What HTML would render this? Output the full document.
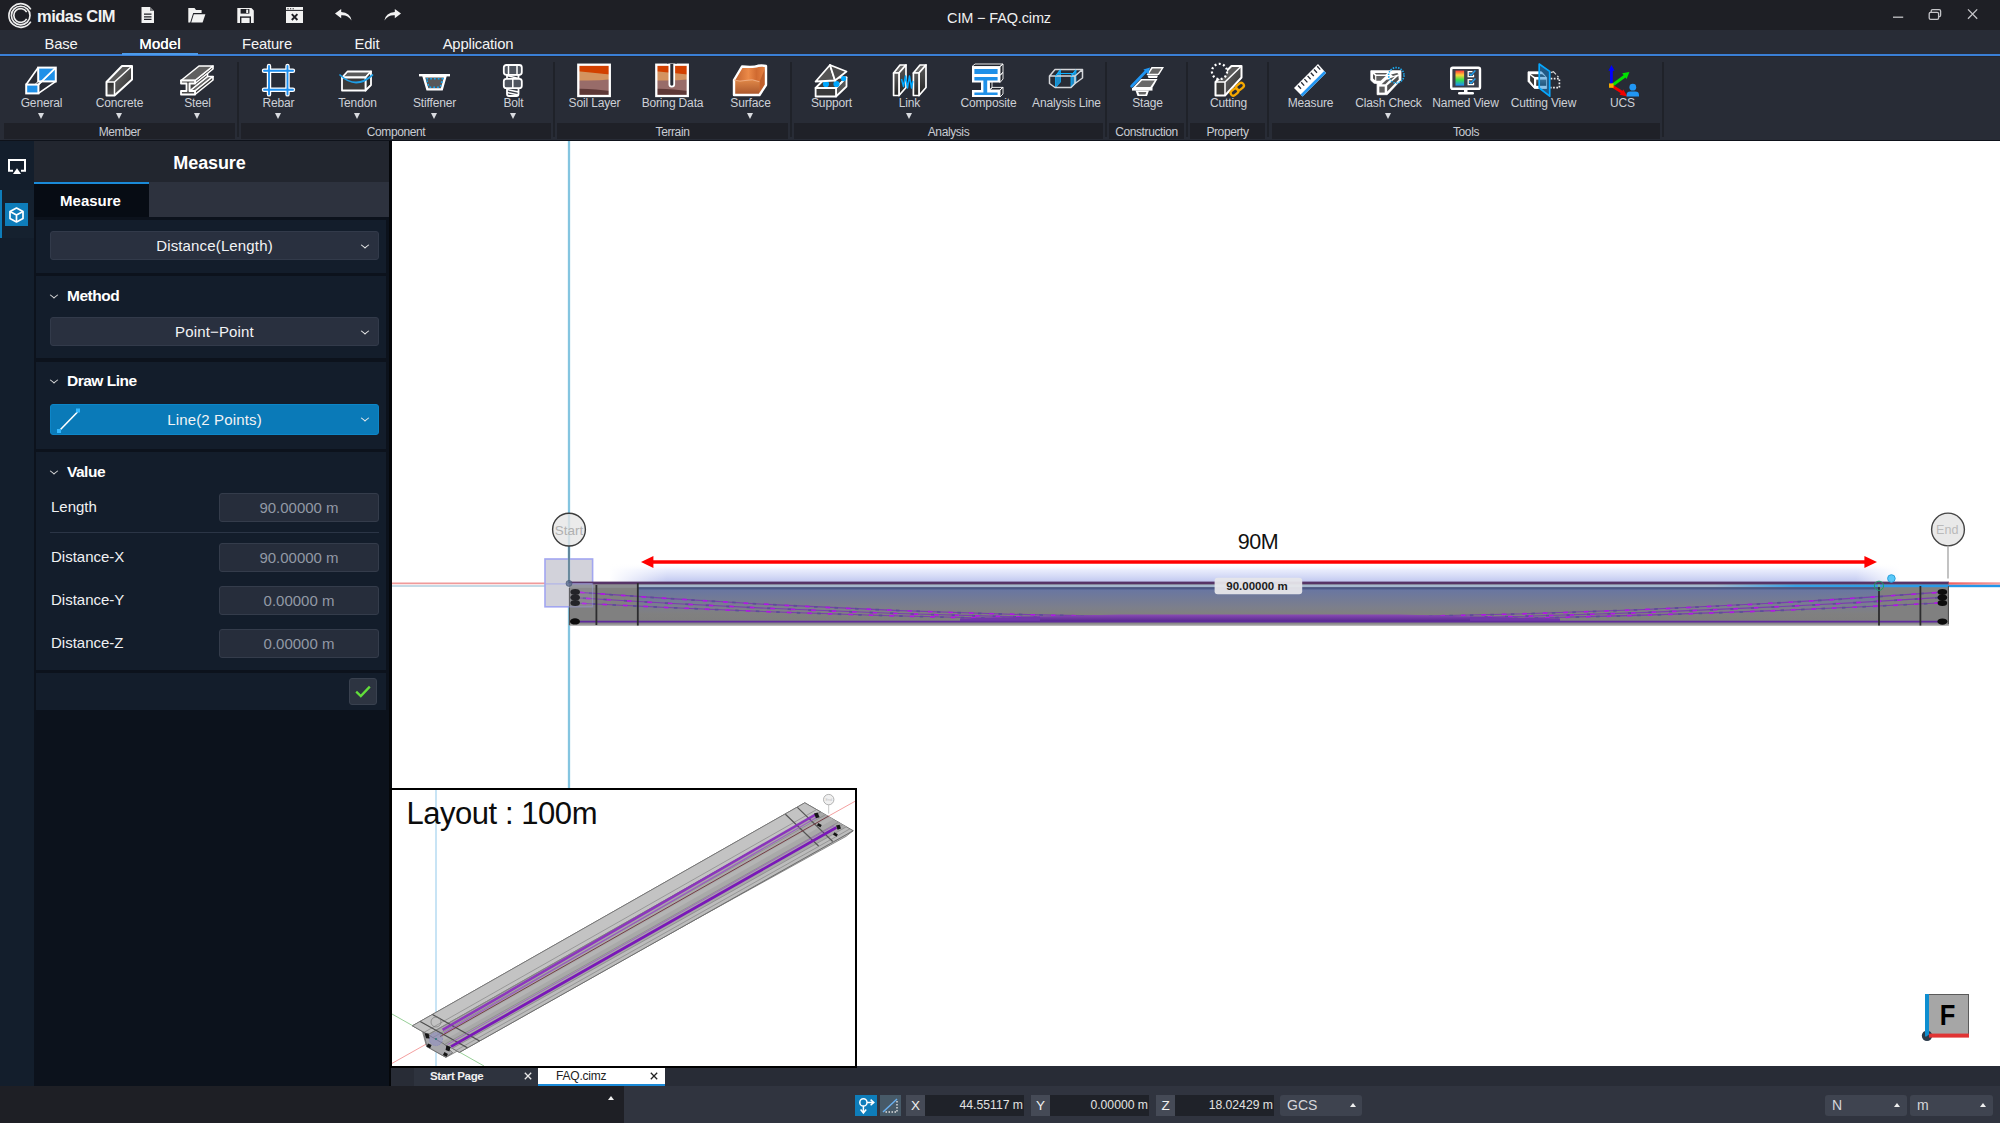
<!DOCTYPE html>
<html lang="en">
<head>
<meta charset="utf-8">
<title>CIM - FAQ.cimz</title>
<style>
*{box-sizing:border-box;margin:0;padding:0}
html,body{width:2000px;height:1123px;overflow:hidden;background:#fff}
body{position:relative;font-family:"Liberation Sans","DejaVu Sans",sans-serif;color:#fff}
.abs{position:absolute}
svg{display:block;overflow:visible}
#title{position:absolute;left:0;top:0;width:2000px;height:30px;background:#1e1f25}
#title .logo{position:absolute;left:37px;top:5.5px;font-size:16.5px;font-weight:700;letter-spacing:-.5px;color:#f2f2f2;line-height:20px;white-space:nowrap}
#title .ttl{position:absolute;left:899px;width:200px;top:8.8px;text-align:center;font-size:14.5px;color:#f0f0f0;line-height:18px;letter-spacing:-.15px;white-space:nowrap}
#menu{position:absolute;left:0;top:30px;width:2000px;height:26px;background:#282c36;border-bottom:2px solid #3a7fd6}
#menu span{position:absolute;top:5.4px;font-size:14.8px;line-height:18px;color:#f4f4f4;letter-spacing:-.15px;white-space:nowrap;transform:translateX(-50%)}
#menu .act{color:#fff;letter-spacing:.25px;text-shadow:.35px 0 0 #fff}
#menu .ul{position:absolute;left:122px;top:23px;width:76px;height:2px;background:#4c9bea}
#ribbon{position:absolute;left:0;top:56px;width:2000px;height:85px;background:#282c36;box-shadow:inset 0 1px 0 #23262e,inset 0 -1px 0 #0e121a}
.grp{position:absolute;top:67px;height:16px;background:#1f2128;font-size:12px;line-height:18px;color:#c9ccd3;text-align:center;letter-spacing:-.4px}
.sep{position:absolute;top:6px;width:2px;height:75px;background:#1f2229}
.it{position:absolute;top:0;width:0;height:66px}
.it svg{position:absolute;left:-16px;top:8px;width:32px;height:32px}
.it b{position:absolute;left:-49.5px;width:100px;text-align:center;top:40px;font-weight:400;font-size:12px;line-height:15px;color:#cdd0d7;letter-spacing:-.15px;white-space:nowrap}
.it i{position:absolute;left:-3px;top:57px;width:0;height:0;border-left:3px solid transparent;border-right:3px solid transparent;border-top:6px solid #d9dbe0}
#side{position:absolute;left:0;top:141px;width:34px;height:945px;background:#131e2c}
#panel{position:absolute;left:34px;top:141px;width:355px;height:945px;background:#0c121c}
#gap{position:absolute;left:389px;top:141px;width:3px;height:945px;background:#05070a}
.sec{position:absolute;left:2px;width:350px;background:#131d2b}
.dd{position:absolute;left:16px;width:329px;height:29px;background:#29303f;border:1px solid #323a4a;border-radius:3px;text-align:center;font-size:15px;line-height:27px;color:#f2f3f5;letter-spacing:.15px}
.dd::after{content:"";position:absolute;right:10px;top:9.5px;width:5px;height:5px;border-right:1.8px solid #ececec;border-bottom:1.8px solid #ececec;transform:scale(1,.8) rotate(45deg)}
.hd{position:absolute;left:33px;font-size:15.5px;font-weight:700;line-height:20px;color:#fff;letter-spacing:-.5px;white-space:nowrap}
.hd::before{content:"";position:absolute;left:-16px;top:5.5px;width:5px;height:5px;border-right:1.6px solid #d8d8d8;border-bottom:1.6px solid #d8d8d8;transform:scale(1,.8) rotate(45deg)}
.lb{position:absolute;left:17px;font-size:15px;line-height:20px;color:#f0f1f3;white-space:nowrap}
.vl{position:absolute;left:185px;width:160px;height:29px;background:#262d3b;border:1px solid #343c4b;border-radius:3px;text-align:center;font-size:15px;line-height:27px;color:#9299a5;}
#view{position:absolute;left:392px;top:141px;width:1608px;height:925px;background:#fff;overflow:hidden}
#tabs{position:absolute;left:391px;top:1066px;width:1609px;height:20px;background:#282c36}
#status{position:absolute;left:0;top:1086px;width:2000px;height:37px;background:#30343f}
#status .l{position:absolute;left:0;top:0;width:624px;height:37px;background:#1e1f25}
.sb{position:absolute;top:9px;height:21px;font-size:12.2px;line-height:21px;white-space:nowrap}

</style>
</head>
<body>

<div id="title">
<svg class="abs" style="left:0;top:0" width="40" height="30" viewBox="0 0 40 30" fill="none" stroke="#ededed" stroke-width="1.65">
<path d="M30.8 9.4A11.8 11.8 0 1 0 30.8 21.6"/>
<circle cx="20.7" cy="15.5" r="9.3"/>
<path d="M26.7 12.05A6.9 6.9 0 1 0 26.7 18.95"/>
</svg>
<div class="logo">midas CIM</div>
<svg class="abs" style="left:141px;top:7px" width="14" height="16" viewBox="0 0 14 16"><path d="M0.5 0H9L13 4V16H0.5Z" fill="#f2f2f2"/><path d="M9 0V4H13" fill="#1e1f25" opacity=".55"/><path d="M3 7.2H10.5M3 9.8H10.5M3 12.4H10.5" stroke="#1e1f25" stroke-width="1.2"/></svg>
<svg class="abs" style="left:188px;top:8px" width="18" height="15" viewBox="0 0 18 15"><path d="M0.3 0H6.5L8 2H13.6V5H5.2L2.2 14.5H0.3Z" fill="#f2f2f2"/><path d="M5.8 6.2H17.4L14.6 14.5H3.2Z" fill="#f2f2f2"/></svg>
<svg class="abs" style="left:237px;top:8px" width="17" height="15" viewBox="0 0 17 15"><path d="M0.3 0H14.4L16.8 2.4V15H0.3Z" fill="#f2f2f2"/><rect x="3.6" y="1" width="8.8" height="4.6" fill="#1e1f25"/><rect x="9.2" y="1.6" width="2" height="3.4" fill="#f2f2f2"/><rect x="3" y="8.4" width="11" height="6.6" fill="#1e1f25"/><rect x="4.4" y="9.8" width="8.2" height="5.2" fill="#f2f2f2"/></svg>
<svg class="abs" style="left:286px;top:7px" width="17" height="16" viewBox="0 0 17 16"><rect x="0" y="0" width="17" height="16" fill="#f2f2f2"/><rect x="1.2" y="3.6" width="14.6" height="0" fill="none"/><path d="M0 3.4H17" stroke="#1e1f25" stroke-width="1"/><path d="M1.4 1.7H2.6M4 1.7H5.2M6.6 1.7H7.8" stroke="#1e1f25" stroke-width="1.1"/><path d="M5.8 7.2L11.4 13M11.4 7.2L5.8 13" stroke="#1e1f25" stroke-width="1.9"/></svg>
<svg class="abs" style="left:335px;top:9px" width="18" height="12" viewBox="0 0 18 12"><path d="M6.2 0L0 4.6L6.2 9.2V6.2Q12.6 5.6 16.6 11.4Q15.2 3.4 6.2 2.9Z" fill="#f2f2f2"/></svg>
<svg class="abs" style="left:383px;top:9px" width="18" height="12" viewBox="0 0 18 12"><path d="M11.8 0L18 4.6L11.8 9.2V6.2Q5.4 5.6 1.4 11.4Q2.8 3.4 11.8 2.9Z" fill="#f2f2f2"/></svg>
<div class="ttl">CIM − FAQ.cimz</div>
<svg class="abs" style="left:1892px;top:8px" width="90" height="14" viewBox="0 0 90 14" fill="none" stroke="#c4c4c8" stroke-width="1.3"><path d="M1 9.2H11.2"/><rect x="39.2" y="1.6" width="9.4" height="7" rx="1.4"/><rect x="37.2" y="4.4" width="9.4" height="7" rx="1.4" fill="#1e1f25"/><path d="M76 1.4L85.2 10.8M85.2 1.4L76 10.8"/></svg>
</div>


<div id="menu">
<span style="left:61px">Base</span>
<span class="act" style="left:160px">Model</span>
<span style="left:267px">Feature</span>
<span style="left:367px">Edit</span>
<span style="left:478px">Application</span>
<div class="ul"></div>
</div>

<div id="ribbon">
<div class="it" style="left:41px"><svg viewBox="0 0 32 32"><path d="M13 17.5L1.5 29" stroke="#fff" stroke-width="1" fill="none"/>
<rect x="13.2" y="3.6" width="17.6" height="13.8" fill="#1e90e8" stroke="#fff" stroke-width="2"/>
<path d="M1.2 20.6L13.2 3.6M13.4 29.4L30.8 17.4M13.4 20.6L30.6 3.8" stroke="#fff" stroke-width="1.7" fill="none"/>
<path d="M13.4 20.6L30.6 3.8" stroke="#fff" stroke-width="1.2"/>
<rect x="1.2" y="20.6" width="12.2" height="8.8" fill="#1e90e8" stroke="#fff" stroke-width="2"/></svg><b>General</b><i></i></div>
<div class="it" style="left:119px"><svg viewBox="0 0 32 32"><defs><linearGradient id="gc1" x1="0" y1="0" x2="1" y2="1"><stop offset="0" stop-color="#6a6a6a"/><stop offset="1" stop-color="#2e2e2e"/></linearGradient>
<linearGradient id="gc2" x1="0" y1="0" x2="0" y2="1"><stop offset="0" stop-color="#2b2b2b"/><stop offset="1" stop-color="#555"/></linearGradient></defs>
<path d="M3.5 18L19 2H29L11.5 18Z" fill="#5a5a5a"/>
<path d="M11.5 18L29 2V15.5L11.5 31.5Z" fill="url(#gc1)"/>
<rect x="3.5" y="18" width="8" height="13.5" fill="url(#gc2)"/>
<path d="M3.5 18L19 2H29V15.5L11.5 31.5H3.5Z" fill="none" stroke="#fff" stroke-width="2" stroke-linejoin="round"/>
<path d="M3.5 18H11.5V31.5M11.5 18L29 2" fill="none" stroke="#fff" stroke-width="1.5"/></svg><b>Concrete</b><i></i></div>
<div class="it" style="left:197px"><svg viewBox="0 0 32 32"><g stroke="#fff" stroke-width="1.6" stroke-linejoin="round">
<path d="M8.5 27H14L32 12.5H26.5Z" fill="#666"/>
<path d="M14 27V30.5L32 16V12.5Z" fill="#3a3a3a"/>
<path d="M8.5 19.5V27L26.5 12.5V5Z" fill="#444"/>
<path d="M14 16.5V19.5L32 5V2Z" fill="#3a3a3a"/>
<path d="M0 16.5H14L32 2H18Z" fill="#606060"/>
<path d="M0 16.5H14V19.5H8.5V27H14V30.5H0V27H5.5V19.5H0Z" fill="#4a4a4a" stroke-width="1.8"/>
</g></svg><b>Steel</b><i></i></div>
<div class="it" style="left:278px"><svg viewBox="0 0 32 32"><g stroke-linecap="round">
<path d="M7 2V30.4M25.5 2V30.4M2 6.8H31M2 25.8H31" stroke="#fff" stroke-width="4.4"/>
<path d="M7 2V30.4M25.5 2V30.4M2 6.8H31M2 25.8H31" stroke="#1e90f0" stroke-width="1.9"/>
</g></svg><b>Rebar</b><i></i></div>
<div class="it" style="left:357px"><svg viewBox="0 0 32 32"><g stroke="#fff" stroke-width="1.8" stroke-linejoin="round">
<path d="M1 13.5L6.5 7.5H30L24.5 13.5Z" fill="#5a5a5a"/>
<path d="M24.5 13.5L30 7.5V21L24.5 26.5Z" fill="#2e2e2e"/>
<rect x="1" y="13.5" width="23.5" height="13" fill="#3a3a3a"/>
</g>
<path d="M-1 11Q15 26 31.5 11" fill="none" stroke="#1f9fe6" stroke-width="1.7" stroke-linecap="round"/></svg><b>Tendon</b><i></i></div>
<div class="it" style="left:434px"><svg viewBox="0 0 32 32"><path d="M5.6 12.4H27.4L23.8 25.4H9.4Z" fill="#585858" stroke="#fff" stroke-width="2.4" stroke-linejoin="miter"/>
<rect x="1" y="10" width="31" height="2.4" fill="#fff"/>
<path d="M8.4 14.8H24.8L22.2 23.2H11Z" fill="none" stroke="#12a8f6" stroke-width="1.6" stroke-dasharray="1.7 2.1"/></svg><b>Stiffener</b><i></i></div>
<div class="it" style="left:513px"><svg viewBox="0 0 32 32"><g stroke="#fff" stroke-width="1.8" fill="#4e545e" stroke-linejoin="round">
<path d="M10 10.5H21.5V15H10Z M10 24H21.5V30Q21.5 32 19.5 32H12Q10 32 10 30Z" fill="#3a3f48"/>
<path d="M10 11.5L21.5 14.5M10 25.5L21.5 28M10 28.5L21.5 31" stroke-width="1.3"/>
<rect x="6.8" y="1" width="18" height="9.8" rx="2.5"/>
<rect x="6.8" y="14.8" width="18" height="9.4" rx="2.5"/>
<path d="M11.5 1V10.8M20 1V10.8M15.8 14.8V24.2" stroke-width="1.5"/>
</g></svg><b>Bolt</b><i></i></div>
<div class="it" style="left:594px"><svg viewBox="0 0 32 32"><rect x="0" y="0" width="32" height="33" fill="#5e3836"/>
<path d="M0 16L10 16Q22 16 32 15V27L18 25.6Q8 24.6 0 24.8Z" fill="#986c69"/>
<path d="M0 6L32 10V15.4Q22 16.4 10 16.4L0 16.6Z" fill="#d4935f"/>
<path d="M0 0H32V10.4L0 7.2Z" fill="#d24000"/>
<rect x="0.3" y="0.7" width="31.5" height="31.3" fill="none" stroke="#fff" stroke-width="2.3"/></svg><b>Soil Layer</b></div>
<div class="it" style="left:672px"><svg viewBox="0 0 32 32"><rect x="0" y="0" width="32" height="33" fill="#5e3836"/>
<path d="M0 16L10 16Q22 16 32 15V27L18 25.6Q8 24.6 0 24.8Z" fill="#986c69"/>
<path d="M0 6L32 10V15.4Q22 16.4 10 16.4L0 16.6Z" fill="#d4935f"/>
<path d="M0 0H32V10.4L0 7.2Z" fill="#d24000"/>
<rect x="0.3" y="0.7" width="31.5" height="31.3" fill="none" stroke="#fff" stroke-width="2.3"/><path d="M13.4 -1V20.6Q13.4 22.6 15.8 22.6Q18.2 22.6 18.2 20.6V-1Z" fill="#282c36" stroke="#fff" stroke-width="1.8"/><rect x="11" y="-2.4" width="10" height="1.9" fill="#282c36"/></svg><b>Boring Data</b></div>
<div class="it" style="left:750px"><svg viewBox="0 0 32 32"><defs><linearGradient id="gs1" x1="0" y1="0" x2="0" y2="1"><stop offset="0" stop-color="#e08848"/><stop offset="1" stop-color="#a8542a"/></linearGradient>
<linearGradient id="gs2" x1="0" y1="0" x2="1" y2="0"><stop offset="0" stop-color="#c0602c"/><stop offset=".45" stop-color="#ec8a48"/><stop offset=".7" stop-color="#d06a30"/><stop offset="1" stop-color="#e88444"/></linearGradient></defs>
<path d="M0 16L8 2.5Q20 3.5 24 1.8Q28 1 32 2V21L25.5 31H0Z" fill="url(#gs2)"/>
<path d="M25.5 17.7L32 2V21L25.5 31Z" fill="#bf5f2b"/>
<path d="M0 16Q6 18 12 16.4Q18 14.6 25.5 17.7V31H0Z" fill="url(#gs1)"/>
<path d="M0 16L8 2.5Q20 3.5 24 1.8Q28 1 32 2V21L25.5 31H0Z" fill="none" stroke="#fff" stroke-width="2.4" stroke-linejoin="round"/>
<path d="M0 16Q6 18 12 16.4Q18 14.6 25.5 17.7" fill="none" stroke="#f2b890" stroke-width=".8"/></svg><b>Surface</b><i></i></div>
<div class="it" style="left:831px"><svg viewBox="0 0 32 32"><g stroke="#fff" stroke-width="1.8" stroke-linejoin="round">
<path d="M0.6 24L11 13.5H31.5L21 24Z" fill="#3d3d3d"/>
<path d="M21 24L31.5 13.5V22.5L21 32.5Z" fill="#555"/>
<rect x="0.6" y="24" width="20.4" height="8.5" fill="#3a3a3a"/>
</g>
<circle cx="11" cy="20" r="3.1" fill="#00a8ff"/><circle cx="21.5" cy="20" r="3.1" fill="#00a8ff"/><circle cx="28.6" cy="14.6" r="2.6" fill="#00a8ff"/>
<g stroke="#fff" stroke-width="1.8" stroke-linejoin="round">
<path d="M15 1L0.6 17.5L20 16.5Z" fill="#555"/>
<path d="M15 1L20 16.5L31.5 7.5Z" fill="#4a4a4a"/>
</g></svg><b>Support</b></div>
<div class="it" style="left:909px"><svg viewBox="0 0 32 32"><defs><linearGradient id="gl1" x1="0" y1="0" x2="0" y2="1"><stop offset="0" stop-color="#5a5a5a"/><stop offset="1" stop-color="#222"/></linearGradient></defs>
<g stroke="#fff" stroke-width="1.7" stroke-linejoin="round">
<path d="M0.6 9L7 1H13L6 9Z" fill="#666"/><path d="M6 9L13 1V23.5L6 31.5Z" fill="url(#gl1)"/><rect x="0.6" y="9" width="5.4" height="22.5" fill="url(#gl1)"/>
<path d="M20.4 9L27 1H33L26 9Z" fill="#666"/><path d="M26 9L33 1V23.5L26 31.5Z" fill="url(#gl1)"/><rect x="20.4" y="9" width="5.6" height="22.5" fill="url(#gl1)"/>
</g>
<path d="M8.5 15L10.5 22.5L12.5 12L14.5 24L16.5 12L18.5 24L19.8 17" fill="none" stroke="#00a8ff" stroke-width="1.5" stroke-linejoin="round"/></svg><b>Link</b><i></i></div>
<div class="it" style="left:988px"><svg viewBox="0 0 32 32"><path d="M28 2.5L31 0H3L0 2.5ZM28 2.5L31 0V8L28 11.5ZM28 11.5L31 8.5V15L28 18.5ZM17.5 18.5L20 16.5V24L17.5 26ZM28 26L31 23V30L28 33ZM17.5 26L20 23.4H31L28 26Z" fill="#22252c" stroke="#fff" stroke-width=".9" stroke-linejoin="round"/>
<path d="M0 2.5H28V18.5H17.5V26H28V33H0V26H9V18.5H0Z" fill="#fff"/>
<path d="M2.4 5H25.6V10H2.4ZM2.4 13H25.6V16.5H15.2V28.5H25.6V31H2.4V28.5H11.4V16.5H2.4Z" fill="#1e90e8"/></svg><b>Composite</b></div>
<div class="it" style="left:1066px"><svg viewBox="0 0 32 32"><path d="M5.5 12L10.5 5.8V18L5.5 23.5ZM21 12L26 5.8V19L21 23.5Z" fill="#1a9de4" fill-opacity=".85" stroke="#10b0ff" stroke-width=".8"/>
<g fill="none" stroke="#d4d6da" stroke-width="1.5" stroke-linejoin="round">
<path d="M-0.5 12L5 5.5H32.5L25 12ZM-0.5 12V19.5L5 23.5H21L25 19.5V12M32.5 5.5V14L25 19.5"/>
</g>
<path d="M5.5 12L10.5 5.8M21 12L26 5.8M7 9.5H23.5" fill="none" stroke="#10b0ff" stroke-width="1.1"/></svg><b>Analysis Line</b></div>
<div class="it" style="left:1147px"><svg viewBox="0 0 32 32"><path d="M16.5 11.5H27L26 14H17.5Z" fill="#fff"/>
<path d="M15.5 11L20.5 3H33L28 11Z" fill="#fff"/>
<path d="M18 9.7L21.5 4.4H30.5L27 9.7Z" fill="#666"/>
<path d="M4.5 26.5H18L16 32H6.5Z" fill="#fff"/>
<path d="M7.2 28H15.4L14.4 30.5H8.2Z" fill="#666"/>
<path d="M1 24H21.5V26.6H1Z" fill="#fff"/>
<path d="M1 24.5L10 15H26.5L21 24.5Z" fill="#fff"/>
<path d="M4.6 23L11 16.4H23.8L19.4 23Z" fill="#6a6a6a"/>
<path d="M0.6 22.2L15 7.2" stroke="#2196f3" stroke-width="2.7" stroke-linecap="round"/>
<path d="M19 3.5L12.4 5.6L17.4 10.2Z" fill="#2196f3"/></svg><b>Stage</b></div>
<div class="it" style="left:1228px"><svg viewBox="0 0 32 32"><defs><linearGradient id="gk1" x1="0" y1="0" x2="1" y2="1"><stop offset="0" stop-color="#6a6a6a"/><stop offset="1" stop-color="#2e2e2e"/></linearGradient></defs>
<path d="M3.5 18L19.5 2H29.5L13 18Z" fill="#5a5a5a"/>
<path d="M13 18L29.5 2V13.5L13 31.5Z" fill="url(#gk1)"/>
<rect x="3.5" y="18" width="9.5" height="13.5" fill="#3a3a3a"/>
<path d="M3.5 18L19.5 2H29.5V13.5L13 31.5H3.5Z" fill="none" stroke="#fff" stroke-width="2" stroke-linejoin="round"/>
<path d="M3.5 18H13V31.5M13 18L29.5 2" fill="none" stroke="#fff" stroke-width="1.5"/>
<circle cx="7.5" cy="7.5" r="7.6" fill="#282c36" stroke="#fff" stroke-width="2.2" stroke-dasharray="2 2.35" />
<g fill="none" stroke="#f5a800" stroke-width="2.3">
<rect x="-4.2" y="-2.6" width="8.4" height="5.2" rx="2.6" transform="translate(22.5 28) rotate(-38)"/>
<rect x="-4.2" y="-2.6" width="8.4" height="5.2" rx="2.6" transform="translate(28 22.5) rotate(-38)"/>
</g></svg><b>Cutting</b></div>
<div class="it" style="left:1310px"><svg viewBox="0 0 32 32"><path d="M0 24L24 0L32 9L8.5 32.5Z" fill="#fff"/>
<path d="M6.6 30.4L30.2 7L32 9L8.5 32.5Z" fill="#2196f3"/>
<path d="M4 21.5L7 24.8M7.2 18.3L10.2 21.6M10.4 15.1L13.4 18.4M13.6 11.9L16.6 15.2M16.8 8.7L19.8 12M20 5.5L23 8.8M23.2 2.3L26.2 5.6" stroke="#282c36" stroke-width="1.3"/></svg><b>Measure</b></div>
<div class="it" style="left:1388px"><svg viewBox="0 0 32 32"><path d="M-1.2 6.7H29V16L15.2 30.7H5.1V19.6L2 19.2L-1.2 16.3Z" fill="#fff" stroke="#fff" stroke-width=".8" stroke-linejoin="round"/>
<path d="M1 9.9L3.1 11.7V16.3L1 14.5Z" fill="#555"/>
<path d="M2.6 8.9H15.2L13.6 10.4H4.2Z" fill="#585858"/>
<path d="M4.3 12H13.8L8.6 16.8H4.3Z" fill="#606060"/>
<rect x="7.3" y="22.6" width="5.4" height="6" fill="#5c5c5c"/>
<path d="M15.2 21.4L26.4 11.8L26.8 15.6L15.2 27.4Z" fill="#4c4c4c"/>
<path d="M9.6 20.2L14.4 15.8L18.6 15L13.4 20.2Z" fill="#5a5a5a"/>
<path d="M19 10.4L25.2 9L26.6 10.2L21 11.9Z" fill="#555"/>
<path d="M17.6 14.6L23 12.6L19 16.2Z" fill="#5a5a5a"/>
<circle cx="24.3" cy="11.3" r="7.7" fill="none" stroke="#1eaaf0" stroke-width="1.6" stroke-dasharray="1.5 1.2"/></svg><b>Clash Check</b><i></i></div>
<div class="it" style="left:1465px"><svg viewBox="0 0 32 32"><defs><linearGradient id="gn1" x1="0" y1="0" x2="0" y2="1"><stop offset="0" stop-color="#ff3a3a"/><stop offset=".3" stop-color="#ffd23a"/><stop offset=".62" stop-color="#35e04a"/><stop offset="1" stop-color="#1e8cff"/></linearGradient></defs>
<rect x="2.2" y="3.8" width="28.8" height="21" rx="1.6" fill="#3b3f4a" stroke="#fff" stroke-width="2.4"/>
<rect x="15" y="25" width="3.5" height="4" fill="#fff"/><rect x="9" y="28" width="16" height="2.6" rx="1.3" fill="#fff"/>
<rect x="6.5" y="6.6" width="8.6" height="15" fill="url(#gn1)"/>
<path d="M23.5 7.6H19.2V12.6H24.5V10.8M23.5 15.6H19.2V20.6H24.5V18.8" fill="none" stroke="#fff" stroke-width="1.3"/>
<path d="M20.3 9.4L22 11.2L26.4 6.6M20.3 17.4L22 19.2L26.4 14.6" fill="none" stroke="#1ea0f0" stroke-width="1.4"/></svg><b>Named View</b></div>
<div class="it" style="left:1543px"><svg viewBox="0 0 32 32"><defs><linearGradient id="gv1" x1="0" y1="0" x2="0" y2="1"><stop offset="0" stop-color="#5c5c5c"/><stop offset="1" stop-color="#262626"/></linearGradient>
<linearGradient id="gv2" x1="0" y1="0" x2="0" y2="1"><stop offset="0" stop-color="#262626"/><stop offset="1" stop-color="#4a4a4a"/></linearGradient></defs>
<g fill="none" stroke="#ececec" stroke-width="1.7" stroke-dasharray="1.7 1.5"><path d="M23.6 14.6H32.4V23.6H23.4"/></g>
<path d="M23.8 8.6L26.4 7.6L29 10.4M30.2 12L31.6 13" fill="none" stroke="#d8d8d8" stroke-width="1.2"/>
<path d="M1 7.8H14.5L19.6 13.6V24.5H7.4L1 17.4Z" fill="#fff" stroke="#fff" stroke-width=".8" stroke-linejoin="round"/>
<path d="M3.8 10.3H15.2L18.8 13.1H7.8Z" fill="url(#gv2)"/>
<path d="M3.1 11.3L7 14.5V21.7L3.1 17Z" fill="#363636"/>
<rect x="9.2" y="15.6" width="10" height="6.2" fill="url(#gv1)"/>
<path d="M12.2 0L22.7 7.4V32.2L12.2 24Z" fill="#1a86d4" fill-opacity=".5" stroke="#06a8ff" stroke-width="1.7" stroke-linejoin="round"/></svg><b>Cutting View</b></div>
<div class="it" style="left:1622px"><svg viewBox="0 0 32 32"><path d="M5.4 21V6" stroke="#0000ff" stroke-width="2.8"/><path d="M2.4 6.8H8.6L5.5 1Z" fill="#0000ff"/>
<path d="M6 21.5L19 12" stroke="#00e400" stroke-width="2.8"/><path d="M16.2 9.2L23.4 8L20.6 15Z" fill="#00e400"/>
<path d="M6 22L16.5 28.5" stroke="#f00000" stroke-width="2.8"/><path d="M13.5 30.8L21.4 32.4L17.4 25.4Z" fill="#f00000"/>
<rect x="3" y="19.4" width="4.6" height="4.4" fill="#f5a800"/>
<circle cx="26.8" cy="23.2" r="3.4" fill="#2196f3"/>
<path d="M20.6 32.6V31Q20.6 27.6 24.4 27.6H29.2Q33 27.6 33 31V32.6Z" fill="#2196f3"/></svg><b>UCS</b></div>
<div class="grp" style="left:4px;width:231px">Member</div>
<div class="grp" style="left:241px;width:310px">Component</div>
<div class="grp" style="left:557px;width:231px">Terrain</div>
<div class="grp" style="left:794px;width:309px">Analysis</div>
<div class="grp" style="left:1109px;width:75px">Construction</div>
<div class="grp" style="left:1190px;width:75px">Property</div>
<div class="grp" style="left:1272px;width:388px">Tools</div>
<div class="sep" style="left:237px"></div>
<div class="sep" style="left:553px"></div>
<div class="sep" style="left:790px"></div>
<div class="sep" style="left:1105px"></div>
<div class="sep" style="left:1186px"></div>
<div class="sep" style="left:1267px"></div>
<div class="sep" style="left:1662px"></div>
</div>
<div id="side">
<div class="abs" style="left:0;top:49px;width:34px;height:48px;background:#15212f"></div>
<div class="abs" style="left:0;top:49px;width:2px;height:48px;background:#0e7dba"></div>
<svg class="abs" style="left:8px;top:18px" width="18" height="16" viewBox="0 0 18 16"><path d="M5 11.8H1V1H17V11.8H13" fill="none" stroke="#fff" stroke-width="2"/><path d="M9 9.2L13 15H5Z" fill="#fff"/></svg>
<div class="abs" style="left:5px;top:62px;width:23px;height:23px;background:#0e7dba"></div>
<svg class="abs" style="left:9px;top:66px" width="15" height="16" viewBox="0 0 15 16" fill="none" stroke="#fff" stroke-width="1.7" stroke-linejoin="round"><path d="M7.5 1L14 4.5V11.5L7.5 15L1 11.5V4.5Z"/><path d="M1 4.5L7.5 8L14 4.5M7.5 8V15"/></svg>
</div>
<div id="panel">
<div class="abs" style="left:0;top:0;width:355px;height:41px;background:#22262f"></div>
<div class="abs" style="left:0;top:11px;width:351px;text-align:center;font-size:18px;font-weight:700;line-height:22px;letter-spacing:-.1px">Measure</div>
<div class="abs" style="left:0;top:41px;width:355px;height:35px;background:#2d323e"></div>
<div class="abs" style="left:0;top:43px;width:115px;height:33px;background:#070c14"></div>
<div class="abs" style="left:0;top:41px;width:115px;height:2px;background:#1a8ad8"></div>
<div class="abs" style="left:0;top:50px;width:113px;text-align:center;font-size:15px;font-weight:700;line-height:20px">Measure</div>

<div class="sec" style="top:79px;height:53px"><div class="dd" style="left:14px;top:11px">Distance(Length)</div></div>
<div class="sec" style="top:135px;height:82px"><div class="hd" style="left:31px;top:10px">Method</div><div class="dd" style="left:14px;top:41px">Point−Point</div></div>
<div class="sec" style="top:221px;height:87px"><div class="hd" style="left:31px;top:9px">Draw Line</div>
 <div class="dd" style="left:14px;top:42px;height:31px;line-height:29px;background:#0a7ab8;border-color:#0d86c8">Line(2 Points)
 <svg class="abs" style="left:5px;top:2px" width="26" height="26" viewBox="0 0 26 26"><path d="M3.5 23.5L21.5 5" stroke="#fff" stroke-width="1.6"/><rect x="1" y="22" width="4" height="4" fill="#35b8ff"/><rect x="20" y="1.5" width="4" height="4" fill="#35b8ff"/></svg></div></div>
<div class="sec" style="top:311px;height:218px"><div class="hd" style="left:31px;top:10px">Value</div>
 <div class="lb" style="left:15px;top:45px">Length</div><div class="vl" style="left:183px;top:41px">90.00000 m</div>
 <div class="abs" style="left:14px;top:80px;width:329px;height:1px;background:#2b3546"></div>
 <div class="lb" style="left:15px;top:95px">Distance-X</div><div class="vl" style="left:183px;top:91px">90.00000 m</div>
 <div class="lb" style="left:15px;top:138px">Distance-Y</div><div class="vl" style="left:183px;top:134px">0.00000 m</div>
 <div class="lb" style="left:15px;top:181px">Distance-Z</div><div class="vl" style="left:183px;top:177px">0.00000 m</div>
</div>
<div class="sec" style="top:532px;height:37px"><div class="abs" style="left:313px;top:5px;width:28px;height:27px;background:#2d3441;border:1px solid #39414f;border-radius:3px"></div>
<svg class="abs" style="left:319px;top:12px" width="16" height="13" viewBox="0 0 16 13"><path d="M1.2 6.6L5.8 11L14.8 1.6" fill="none" stroke="#62de3a" stroke-width="2.3"/></svg></div>
</div>
<div id="gap"></div>

<div id="view">
<svg class="abs" style="left:-1px;top:0" width="1609" height="925" viewBox="391 141 1609 925" font-family="Liberation Sans, sans-serif">
<defs>
<linearGradient id="glowv" x1="0" y1="0" x2="0" y2="1"><stop offset="0" stop-color="#ffffff" stop-opacity="0"/><stop offset=".35" stop-color="#e6eafc" stop-opacity=".9"/><stop offset="1" stop-color="#bcc4ee"/></linearGradient>
<linearGradient id="glowh" x1="0" y1="0" x2="1" y2="0"><stop offset="0" stop-color="#fff" stop-opacity="1"/><stop offset=".045" stop-color="#fff" stop-opacity="0"/><stop offset=".965" stop-color="#fff" stop-opacity="0"/><stop offset="1" stop-color="#fff" stop-opacity="1"/></linearGradient>
<linearGradient id="body" x1="0" y1="0" x2="0" y2="1"><stop offset="0" stop-color="#6876a2"/><stop offset=".55" stop-color="#7c7f8c"/><stop offset=".75" stop-color="#808080"/><stop offset="1" stop-color="#7e7e7e"/></linearGradient>
<linearGradient id="band" x1="0" y1="0" x2="1" y2="0"><stop offset="0" stop-color="#a4b6cc"/><stop offset=".79" stop-color="#a4b8d0"/><stop offset=".85" stop-color="#38a0e6"/><stop offset="1" stop-color="#2196e8"/></linearGradient>
<linearGradient id="purp" x1="0" y1="0" x2="0" y2="1"><stop offset="0" stop-color="#8a4cb4"/><stop offset="1" stop-color="#55268e"/></linearGradient>
<linearGradient id="redf" x1="0" y1="0" x2="1" y2="0"><stop offset="0" stop-color="#f06060"/><stop offset="1" stop-color="#f4a0a0"/></linearGradient>
</defs>
<!-- axis lines -->
<path d="M391 583.4H545" stroke="#f09a9a" stroke-width="1.7"/>
<path d="M391 586H545" stroke="#c4dae6" stroke-width="2"/>
<path d="M569 141V788" stroke="#84c5e0" stroke-width="2.3"/>
<!-- glow -->
<rect x="610" y="563" width="1290" height="20" fill="url(#glowv)"/>
<rect x="609" y="562" width="1292" height="22" fill="url(#glowh)"/>
<!-- selection square -->
<rect x="545" y="559" width="47.6" height="47.8" fill="#d2d2da" stroke="#a2a6f0" stroke-width="1.6"/>
<path d="M569 546V584" stroke="#86c4de" stroke-width="2.3" opacity=".7"/><path d="M569 546V584" stroke="#4a6274" stroke-width="1.2"/>
<!-- beam -->
<rect x="569" y="582" width="1380" height="43.4" fill="#808080"/>
<rect x="638" y="589" width="1241" height="33" fill="url(#body)"/>
<rect x="569" y="584.4" width="69" height="3.4" fill="#8c8e92"/>
<rect x="638" y="584.5" width="1362" height="2.7" fill="url(#band)"/>
<rect x="638" y="587.2" width="1241" height="2.2" fill="#4a5886"/>
<rect x="569" y="581.6" width="1380" height="2.6" fill="#563466"/>
<rect x="1948.5" y="582.3" width="52" height="2.3" fill="url(#redf)"/>
<rect x="569" y="623.6" width="1380" height="1.8" fill="#9a9a9a"/>
<!-- tendons -->
<g fill="none" stroke="#7a3eae" stroke-width="1.1">
<path id="t1" d="M580 592.4Q919.5 617.6 1259 617.6Q1598.5 617.6 1938 592.4"/>
<path id="t2" d="M580 598Q919.5 619.6 1259 619.6Q1598.5 619.6 1938 597.6"/>
<path id="t3" d="M580 603.2Q919.5 621 1259 621Q1598.5 621 1938 603"/>
</g>
<g fill="none" stroke="#5e4c98" stroke-width="1.8" stroke-dasharray="3.5 17">
<use href="#t1" stroke-dashoffset="-9"/><use href="#t2" stroke-dashoffset="-3"/><use href="#t3" stroke-dashoffset="-12"/>
</g>
<g fill="none" stroke="#b216e6" stroke-width="1.7" stroke-dasharray="4.5 16">
<use href="#t1"/><use href="#t2" stroke-dashoffset="-6"/><use href="#t3" stroke-dashoffset="-2"/>
</g>
<path d="M1040 616.4L1120 614.6H1400L1470 616.4V621.6H1040Z" fill="url(#purp)"/>
<path d="M960 618.6L1040 616.4V621.6H960Z M1470 616.4L1560 618.6V621.6H1470Z" fill="#7038a8"/>
<path d="M580 621.6H1938" stroke="#5e2a9c" stroke-width="1.8"/>
<!-- diaphragm lines -->
<path d="M596.4 585V625M637.8 583V625.6M1879 586V625.6M1920.4 586V625.6" stroke="#2c2c2e" stroke-width="1.8"/>
<path d="M569.4 588V625M1948.4 586V624" stroke="#4a4a4a" stroke-width="1"/>
<!-- anchors -->
<g fill="#0c0c0c">
<ellipse cx="575.2" cy="592" rx="4.8" ry="3"/><ellipse cx="575.2" cy="597.6" rx="4.8" ry="3"/><ellipse cx="575.2" cy="603" rx="4.8" ry="3"/><ellipse cx="575" cy="621.4" rx="5" ry="3.2"/>
<ellipse cx="1942.4" cy="592" rx="4.8" ry="3"/><ellipse cx="1942.4" cy="597.6" rx="4.8" ry="3"/><ellipse cx="1942.4" cy="603" rx="4.8" ry="3"/><ellipse cx="1942.4" cy="621.6" rx="5" ry="3.2"/>
</g>
<!-- selection overlay -->
<rect x="569" y="583" width="23.6" height="23.8" fill="#c8c8e8" fill-opacity=".13"/>
<path d="M592.6 583V606.8H569" fill="none" stroke="#9a9ee0" stroke-width="1.2" opacity=".45"/>
<path d="M545 583.8H592" stroke="#a8acec" stroke-width="1.3" opacity=".75"/>
<circle cx="569" cy="583.4" r="3" fill="#56688a" fill-opacity=".75" stroke="#40506c" stroke-width=".7" stroke-opacity=".8"/>
<!-- red dimension arrow -->
<path d="M652 562H1866" stroke="#ff0000" stroke-width="3.5"/>
<path d="M641 562L653.4 556V568Z M1877 562L1864.4 556V568Z" fill="#ff0000"/>
<!-- start/end -->
<circle cx="569" cy="529.6" r="16.4" fill="#e6e6e6" fill-opacity=".78" stroke="#3c3c3c" stroke-width="1.4"/>
<text x="569" y="534.6" font-size="13.4" fill="#b0b0b0" text-anchor="middle">Start</text>
<path d="M1948 547V578.4" stroke="#9a9a9a" stroke-width="1.2"/>
<circle cx="1948" cy="529.5" r="16.4" fill="#e9e9e9" stroke="#444" stroke-width="1.4"/>
<text x="1947.2" y="534.2" font-size="12.6" fill="#bababa" text-anchor="middle">End</text>
<circle cx="1891.4" cy="578.5" r="3.8" fill="#58c8f8" stroke="#2aa0dc" stroke-width="1"/>
<circle cx="1879" cy="585.8" r="4.6" fill="none" stroke="#1ea266" stroke-width="1"/><circle cx="1879" cy="585.8" r="1.4" fill="#6ab8a0"/>
<!-- labels -->
<text x="1258" y="549" font-size="21.5" fill="#111" text-anchor="middle" letter-spacing="-.4">90M</text>
<rect x="1214.6" y="577.8" width="87.6" height="16.4" rx="3" fill="#e6e6ea" fill-opacity=".95"/>
<text x="1257" y="590" font-size="11.5" font-weight="700" fill="#1c1c1c" text-anchor="middle">90.00000 m</text>
<!-- view cube -->
<rect x="1928.5" y="994.5" width="40" height="40" fill="#a6a6a6" stroke="#5a5a5a" stroke-width="1"/>
<rect x="1925" y="994" width="4" height="42" fill="#0e8ed0"/>
<circle cx="1927" cy="1035.8" r="5.2" fill="#2b3a4a"/>
<rect x="1929" y="1033.6" width="40" height="4" fill="#e03434"/>
<path d="M1925 1030H1929V1034.4L1926.4 1036.6H1925Z" fill="#0e8ed0"/>
<text x="0" y="0" font-size="29" font-weight="700" fill="#000" text-anchor="middle" transform="translate(1947.6 1025.2) scale(.88 1)">F</text>
</svg>
</div>
<div class="abs" style="left:390px;top:788px;width:467px;height:280px;background:#fff;border:2px solid #000;overflow:hidden;z-index:5">
<svg class="abs" style="left:-2px;top:-2px" width="467" height="280" viewBox="390 788 467 280" font-family="Liberation Sans, sans-serif">
<path d="M436 790V1067" stroke="#c2e1f4" stroke-width="1.8"/>
<path d="M392 1014L484 1066" stroke="#98cf98" stroke-width="1"/>
<path d="M392 1063.4L431 1041.4" stroke="#f4a0a0" stroke-width="1"/>
<path d="M828.7 816L855 801.3" stroke="#f4a0a0" stroke-width="1"/>
<!-- girder underside / side strip -->
<path d="M459.4 1052.4L853.2 830.7L846 836.4L446 1057.4L426.6 1046.6L422 1030Z" fill="#c6c6c6" stroke="#7a7a7a" stroke-width=".8"/>
<!-- deck -->
<path d="M412.4 1025.8L804.8 802.8L853.2 830.7L459.4 1052.4Z" fill="#bcbcbc" stroke="#6e6e6e" stroke-width="1"/>
<path d="M428 1034.7L820.6 811.9L846.4 826.8L452.4 1048.4Z" fill="#a9a9a9"/>
<path d="M437 1039.8L829.4 817L833.4 819.3L441 1042Z" fill="#b4b4b4"/>
<path d="M412.4 1025.8L804.8 802.8L820.6 811.9L428 1034.7Z" fill="#c3c3c3" stroke="#707070" stroke-width=".8"/>
<g stroke="#858585" stroke-width=".7" fill="none">
<path d="M424 1032.4L816.6 809.6M428 1034.7L820.6 811.9M433 1037.5L825.4 814.7M445 1044.2L838.4 822.2M449 1046.5L842.6 824.6M452.4 1048.4L846.4 826.8M456 1050.4L850 828.8"/>
</g>
<!-- diaphragms -->
<g stroke="#4e4e4e" stroke-width="1.2" fill="none">
<path d="M420.2 1021.4L467.4 1047.8M432.4 1014.4L479.6 1041"/>
<path d="M785.4 814.3L818.6 846M797.4 807.4L832.7 841.5" stroke="#565656"/>
</g>
<circle cx="436" cy="1022" r="5" fill="none" stroke="#777" stroke-width=".7"/>
<!-- tendons -->
<path d="M442.6 1029.8L815.4 814.7" stroke="#8a2cc0" stroke-width="2.6" opacity=".9"/>
<path d="M444 1033L816.6 817.6" stroke="#9a4cc8" stroke-width="1.2" opacity=".8"/>
<path d="M451 1046.6L836.3 827.5" stroke="#7a18b8" stroke-width="2.8"/>
<path d="M447.6 1044.6L834 825.6" stroke="#9a4cc8" stroke-width="1" opacity=".7"/>
<path d="M440 1036.6L828.7 816" stroke="#6e3038" stroke-width=".9"/>
<!-- end face -->
<path d="M423.4 1032L427 1046.6L445.6 1057.2L452.6 1052.8L444 1044Z" fill="#a8a8ac" stroke="#666" stroke-width=".8"/>
<circle cx="436" cy="1039" r="6.6" fill="#8a88c8" fill-opacity=".45" stroke="#7a78c0" stroke-width=".6" stroke-dasharray="1 1"/>
<circle cx="436" cy="1039" r="1" fill="#2a7a7a"/>
<g fill="#151515"><path d="M424.6 1033.2L428.6 1033.6L429.6 1038.4L426 1038.2Z"/><rect x="427.4" y="1044" width="4" height="3.4" transform="rotate(25 429 1045)"/><path d="M446.4 1045.2L450.6 1047L449.4 1051.6L445.6 1050Z"/><rect x="443.6" y="1052.6" width="4" height="3.2" transform="rotate(28 445 1054)"/>
<path d="M814 813.4L817.6 812.6L819.6 817.2L816 818.2Z"/><rect x="817.4" y="823.6" width="4" height="2.8" transform="rotate(28 819 825)"/><path d="M836 825.6L839.6 824.8L841 828.6L837.6 829.8Z"/><rect x="833.6" y="832.8" width="4" height="2.8" transform="rotate(28 835 834)"/></g>
<!-- end marker -->
<path d="M828.7 804.6V813.6" stroke="#c8c8c8" stroke-width="1"/>
<circle cx="828.7" cy="799.6" r="5.2" fill="#f0f0f0" stroke="#a0a0a0" stroke-width=".8"/>
<text x="828.7" y="801" font-size="3.6" fill="#c0c0c0" text-anchor="middle">End</text>
<text x="406.4" y="824.4" font-size="31" fill="#0c0c0c" letter-spacing="-.45">Layout : 100m</text>

</svg>
</div>

<div id="tabs">
<div class="abs" style="left:23px;top:0;width:124px;height:20px;background:#2e333e"></div>
<div class="abs" style="left:39px;top:2px;font-size:11.5px;font-weight:700;line-height:16px;color:#f0f0f0;letter-spacing:-.35px;white-space:nowrap">Start Page</div>
<svg class="abs" style="left:133px;top:6px" width="8" height="8" viewBox="0 0 8 8"><path d="M.8.8L7.2 7.2M7.2.8L.8 7.2" stroke="#e8e8e8" stroke-width="1.3"/></svg>
<div class="abs" style="left:147px;top:0;width:127px;height:20px;background:#fff;border-bottom:2px solid #1a8ad8"></div>
<div class="abs" style="left:165px;top:2px;font-size:12px;line-height:16px;color:#222;letter-spacing:-.2px;white-space:nowrap">FAQ.cimz</div>
<svg class="abs" style="left:259px;top:6px" width="8" height="8" viewBox="0 0 8 8"><path d="M.8.8L7.2 7.2M7.2.8L.8 7.2" stroke="#222" stroke-width="1.3"/></svg>
</div>
<div id="status"><div class="l"></div>
<svg class="abs" style="left:608px;top:9.5px" width="6" height="4" viewBox="0 0 6 4"><path d="M0 4L3 0L6 4Z" fill="#f0f0f0"/></svg>
<div class="sb" style="left:855px;width:22px;background:#0e7dba"></div>
<svg class="abs" style="left:858px;top:11px" width="17" height="17" viewBox="0 0 17 17" fill="none" stroke="#fff" stroke-width="1.5"><circle cx="5.4" cy="5.4" r="3.6"/><path d="M5.4 9V16M2.6 12.6L5.4 16L8.2 12.6"/><path d="M9 5.4H15.6M12.6 2.6L15.8 5.4L12.6 8.2"/></svg>
<div class="sb" style="left:880px;width:21px;background:#475a68"></div>
<svg class="abs" style="left:882px;top:12px" width="17" height="15" viewBox="0 0 17 15" fill="none"><path d="M1 14L15 1" stroke="#6ab0f0" stroke-width="1.5"/><path d="M15 3V14H3" stroke="#e0e0e0" stroke-width="1.4" stroke-dasharray="1.5 1.5"/></svg>
<div class="sb" style="left:906px;width:19px;background:#454a56;text-align:center;font-size:13.5px;color:#f0f0f0">X</div>
<div class="sb" style="left:925px;width:99px;background:#1f2229;text-align:right;padding-right:1px;color:#e2e2e2">44.55117 m</div>
<div class="sb" style="left:1031px;width:19px;background:#454a56;text-align:center;font-size:13.5px;color:#f0f0f0">Y</div>
<div class="sb" style="left:1050px;width:99px;background:#1f2229;text-align:right;padding-right:1px;color:#e2e2e2">0.00000 m</div>
<div class="sb" style="left:1156px;width:19px;background:#454a56;text-align:center;font-size:13.5px;color:#f0f0f0">Z</div>
<div class="sb" style="left:1175px;width:99px;background:#1f2229;text-align:right;padding-right:1px;color:#e2e2e2">18.02429 m</div>
<div class="sb" style="left:1280px;width:82px;background:#3e434f;border-radius:3px;padding-left:7px;font-size:14px;color:#d6d6da">GCS</div>
<svg class="abs" style="left:1350px;top:17px" width="6" height="4" viewBox="0 0 6 4"><path d="M0 4L3 0L6 4Z" fill="#f0f0f0"/></svg>
<div class="sb" style="left:1825px;width:82px;background:#3f4450;border-radius:3px;padding-left:7px;font-size:14px;color:#d6d6da">N</div>
<svg class="abs" style="left:1894px;top:17px" width="6" height="4" viewBox="0 0 6 4"><path d="M0 4L3 0L6 4Z" fill="#f0f0f0"/></svg>
<div class="sb" style="left:1910px;width:83px;background:#3f4450;border-radius:3px;padding-left:7px;font-size:14px;color:#d6d6da">m</div>
<svg class="abs" style="left:1980px;top:17px" width="6" height="4" viewBox="0 0 6 4"><path d="M0 4L3 0L6 4Z" fill="#f0f0f0"/></svg>
</div>

</body>
</html>
